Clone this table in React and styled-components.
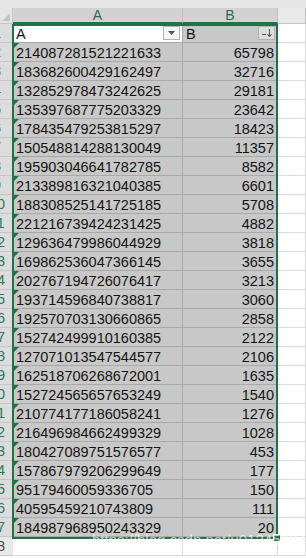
import React from "react";
import styled, { createGlobalStyle } from "styled-components";

const rows = [
  ["214087281521221633", 65798],
  ["183682600429162497", 32716],
  ["132852978473242625", 29181],
  ["135397687775203329", 23642],
  ["178435479253815297", 18423],
  ["150548814288130049", 11357],
  ["195903046641782785", 8582],
  ["213389816321040385", 6601],
  ["188308525141725185", 5708],
  ["221216739424231425", 4882],
  ["129636479986044929", 3818],
  ["169862536047366145", 3655],
  ["202767194726076417", 3213],
  ["193714596840738817", 3060],
  ["192570703130660865", 2858],
  ["152742499910160385", 2122],
  ["127071013547544577", 2106],
  ["162518706268672001", 1635],
  ["152724565657653249", 1540],
  ["210774177186058241", 1276],
  ["216496984662499329", 1028],
  ["180427089751576577", 453],
  ["157867979206299649", 177],
  ["95179460059336705", 150],
  ["40595459210743809", 111],
  ["184987968950243329", 20],
];

const GlobalStyle = createGlobalStyle`
  html, body {
    margin: 0;
    padding: 0;
    background: #ffffff;
  }
  body {
    font-family: "Liberation Sans", Arial, sans-serif;
  }
`;

const Sheet = styled.div`
  position: relative;
  width: 306px;
  height: 558px;
  overflow: hidden;
  background: #ffffff;
`;

const TopBand = styled.div`
  height: 8px;
  background: #e6e6e6;
`;

const Grid = styled.div`
  display: grid;
  grid-template-columns: 13px 170px 95px 1fr;
  grid-auto-rows: 19px;
  grid-template-rows: 16px;
  font-size: 14.5px;
  color: #141414;
`;

const Corner = styled.div`
  position: relative;
  background: #e6e6e6;
  border-right: 1px solid #c6c6c6;
  border-bottom: 1px solid #c6c6c6;

  &::after {
    content: "";
    position: absolute;
    right: 2px;
    bottom: 2px;
    border-left: 8px solid transparent;
    border-bottom: 8px solid #c4c4c4;
  }
`;

const ColHead = styled.div`
  display: flex;
  align-items: center;
  justify-content: center;
  font-size: 14px;
  background: ${(p) => (p.$on ? "#d2d2d2" : "#e9e9e9")};
  color: ${(p) => (p.$on ? "#2b6b49" : "#444")};
  border-right: 1px solid #bdbdbd;
  border-bottom: ${(p) => (p.$on ? "2px solid #217346" : "1px solid #c6c6c6")};
  box-sizing: border-box;
`;

const RowHead = styled.div`
  overflow: hidden;
  background: ${(p) => (p.$on ? "#dcdcdc" : "#e9e9e9")};
  color: ${(p) => (p.$on ? "#2b7a5a" : "#444")};
  border-bottom: 1px solid #c6c6c6;
  box-sizing: border-box;
  line-height: 19px;

  span {
    display: block;
    width: 26px;
    margin-left: -16px;
    text-align: center;
  }
`;

const Cell = styled.div`
  position: relative;
  box-sizing: border-box;
  display: flex;
  align-items: center;
  justify-content: ${(p) => (p.$num ? "flex-end" : "flex-start")};
  padding: ${(p) => (p.$num ? "1px 3px 0 0" : "1px 0 0 3px")};
  background: ${(p) => (p.$white ? "#ffffff" : p.$sel ? "#c8c8c8" : "#ffffff")};
  border-right: 1px solid ${(p) => (p.$sel ? "#a9a9a9" : "#dadada")};
  border-bottom: 1px solid ${(p) => (p.$sel ? "#a9a9a9" : "#dadada")};
  white-space: nowrap;
  overflow: hidden;

  ${(p) =>
    p.$flag &&
    `&::before {
      content: "";
      position: absolute;
      left: 1px;
      top: 0;
      border-top: 5px solid #1e7145;
      border-right: 5px solid transparent;
    }`}
`;

const Filter = styled.div`
  position: absolute;
  right: 2px;
  top: 2px;
  width: 17px;
  height: 14px;
  box-sizing: border-box;
  border: 1px solid #b4b4b4;
  background: ${(p) => (p.$sorted ? "#dedede" : "#f7f7f7")};
  display: flex;
  align-items: center;
  justify-content: center;
`;

const Selection = styled.div`
  position: absolute;
  left: 12px;
  top: 24px;
  width: 266px;
  height: 515px;
  box-sizing: border-box;
  border: 2px solid #217346;
  pointer-events: none;
`;

const Handle = styled.div`
  position: absolute;
  right: -5px;
  bottom: -5px;
  width: 6px;
  height: 6px;
  background: #217346;
  border: 1px solid #ffffff;
`;

const Watermark = styled.div`
  position: absolute;
  left: 92px;
  top: 531px;
  font-size: 15px;
  color: rgba(255, 255, 255, 0.7);
  white-space: nowrap;
  pointer-events: none;
`;

const DownArrow = () => (
  <svg width="9" height="6" viewBox="0 0 9 6">
    <path d="M1 1 L8 1 L4.5 5 Z" fill="#555" />
  </svg>
);

const SortIcon = () => (
  <svg width="12" height="10" viewBox="0 0 12 10">
    <path d="M1 6.5 H5" stroke="#555" strokeWidth="1" />
    <path d="M8.5 1 V8" stroke="#555" strokeWidth="1" />
    <path d="M6.5 6 L8.5 9 L10.5 6" stroke="#555" strokeWidth="1" fill="none" />
  </svg>
);

export default function App() {
  return (
    <Sheet>
      <GlobalStyle />
      <TopBand />
      <Grid>
        <Corner />
        <ColHead $on>A</ColHead>
        <ColHead $on>B</ColHead>
        <ColHead />

        <RowHead $on>
          <span>1</span>
        </RowHead>
        <Cell $white $sel>
          A
          <Filter>
            <DownArrow />
          </Filter>
        </Cell>
        <Cell $sel>
          B
          <Filter $sorted>
            <SortIcon />
          </Filter>
        </Cell>
        <Cell />

        {rows.map(([a, b], i) => (
          <React.Fragment key={a}>
            <RowHead $on>
              <span>{i + 2}</span>
            </RowHead>
            <Cell $sel $flag>
              {a}
            </Cell>
            <Cell $sel $num>
              {b}
            </Cell>
            <Cell />
          </React.Fragment>
        ))}

        <RowHead>
          <span>28</span>
        </RowHead>
        <Cell />
        <Cell />
        <Cell />
      </Grid>
      <Selection>
        <Handle />
      </Selection>
      <Watermark>https://blog.csdn.net/u012453843</Watermark>
    </Sheet>
  );
}
